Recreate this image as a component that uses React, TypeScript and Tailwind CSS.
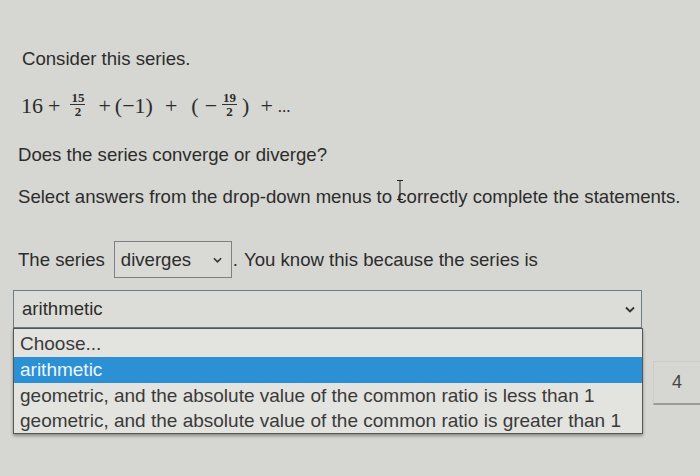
import React from "react";

const options = [
  "Choose...",
  "arithmetic",
  "geometric, and the absolute value of the common ratio is less than 1",
  "geometric, and the absolute value of the common ratio is greater than 1",
];

function Frac({ num, den }: { num: string; den: string }) {
  return (
    <span className="inline-flex flex-col items-center mx-[5px] text-[13px] font-bold leading-[11px] relative top-[-1px]">
      <span className="px-[1px] pb-[1px] border-b border-[#333]">{num}</span>
      <span className="pt-[1px]">{den}</span>
    </span>
  );
}

function Chevron({ className }: { className: string }) {
  return (
    <svg viewBox="0 0 10 6" className={className} fill="none" stroke="currentColor" strokeWidth={1.8}>
      <path d="M1 1l4 4 4-4" />
    </svg>
  );
}

export default function App() {
  return (
    <div className="relative w-[700px] h-[476px] overflow-hidden bg-[#d6d7d2] text-[#2c2c2c] font-['Liberation_Sans',Arial,sans-serif] text-[18.6px]">
      {/* Question text */}
      <div className="flex flex-col pt-[47px]">
        <p className="pl-[22px] leading-[24px]">Consider this series.</p>

        <p className="pl-[21px] mt-[19px] h-[30px] flex items-center font-['Liberation_Serif','DejaVu_Serif',serif] text-[22px]">
          <span>16</span>
          <span className="mx-[5px]">+</span>
          <Frac num="15" den="2" />
          <span className="ml-[8px] mr-[4px]">+</span>
          <span>(−1)</span>
          <span className="ml-[12px] mr-[14px]">+</span>
          <span>(</span>
          <span className="ml-[6px]">−</span>
          <Frac num="19" den="2" />
          <span>)</span>
          <span className="ml-[11px] mr-[5px]">+</span>
          <span className="text-[17px] relative top-[2px]">...</span>
        </p>

        <p className="pl-[18px] mt-[23px] leading-[24px]">Does the series converge or diverge?</p>

        <p className="pl-[18px] mt-[18px] leading-[24px]">
          Select answers from the drop-down menus to correctly complete the statements.
        </p>

        {/* First statement */}
        <div className="flex items-center mt-[32px] pl-[18px] h-[37px]">
          <span>The series</span>
          <div className="ml-[9px] w-[118px] h-[37px] border border-[#7d7f80] bg-[#d9dad5] flex items-center justify-between pl-[6px] pr-[9px]">
            <span>diverges</span>
            <Chevron className="w-[9px] h-[6px] text-[#333]" />
          </div>
          <span className="ml-[1px]">.</span>
          <span className="ml-[6px]">You know this because the series is</span>
        </div>

        {/* Second select (open) */}
        <div className="ml-[13px] mt-[12px] w-[629px] h-[38px] border border-[#6f7c86] bg-[#dcddd8] flex items-center justify-between pl-[8px] pr-[6px]">
          <span>arithmetic</span>
          <Chevron className="w-[10px] h-[7px] text-[#333]" />
        </div>
      </div>

      {/* Table cell behind the list */}
      <div className="absolute left-[653px] top-[361px] w-[47px] h-[44px] border-t border-l border-[#cbccc7] border-b-2 border-b-[#9a9b98] flex items-center justify-center text-[18px] text-[#444]">
        4
      </div>

      {/* Dropdown list */}
      <div className="absolute left-[13px] top-[328px] w-[630px] border border-[#555] bg-[#e3e3df] shadow-[0_2px_3px_rgba(0,0,0,0.35)] text-[19px] leading-[26px]">
        {options.map((o, i) => (
          <div
            key={o}
            className={
              i === 1
                ? "h-[26px] pl-[6px] bg-[#2b90d4] text-[#eef6fb]"
                : i === 0
                ? "h-[28px] pl-[6px] pt-[2px] text-[#3a3a3a]"
                : "h-[25px] pl-[6px] text-[#3a3a3a]"
            }
          >
            {o}
          </div>
        ))}
      </div>

      {/* Text cursor */}
      <svg viewBox="0 0 8 20" className="absolute left-[396px] top-[180px] w-[8px] h-[20px] text-[#222]" fill="none" stroke="currentColor" strokeWidth={1}>
        <path d="M1 0.5h6M4 0.5v19M1 19.5h6" />
      </svg>
    </div>
  );
}
